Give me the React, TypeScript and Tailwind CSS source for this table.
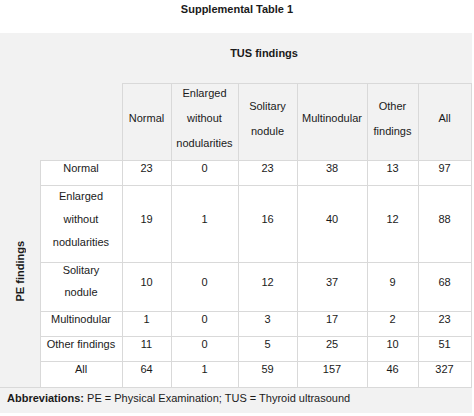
type Row = { label: string[]; labelLine: string; labelPad: string; h: string; values: number[] };

const headers: string[][] = [
  ["Normal"],
  ["Enlarged", "without", "nodularities"],
  ["Solitary", "nodule"],
  ["Multinodular"],
  ["Other", "findings"],
  ["All"],
];

const rows: Row[] = [
  { label: ["Normal"], labelLine: "h-[20px]", labelPad: "pb-[4px]", h: "h-[25px]", values: [23, 0, 23, 38, 13, 97] },
  {
    label: ["Enlarged", "without", "nodularities"],
    labelLine: "h-[23px]",
    labelPad: "pb-0",
    h: "h-[77px]",
    values: [19, 1, 16, 40, 12, 88],
  },
  { label: ["Solitary", "nodule"], labelLine: "h-[22px]", labelPad: "pb-[4px]", h: "h-[49px]", values: [10, 0, 12, 37, 9, 68] },
  { label: ["Multinodular"], labelLine: "h-[20px]", labelPad: "pb-[4px]", h: "h-[25px]", values: [1, 0, 3, 17, 2, 23] },
  { label: ["Other findings"], labelLine: "h-[20px]", labelPad: "pb-[4px]", h: "h-[25px]", values: [11, 0, 5, 25, 10, 51] },
  { label: ["All"], labelLine: "h-[20px]", labelPad: "pb-[4px]", h: "h-[26px]", values: [64, 1, 59, 157, 46, 327] },
];

// Word-style line spacing: glyphs sit at the top of each line box
const Lines = ({ lines, line }: { lines: string[]; line: string }) => (
  <>
    {lines.map((l, i) => (
      <span key={i} className={`block leading-[14px] ${line}`}>
        {l}
      </span>
    ))}
  </>
);

export default function App() {
  return (
    <div className="w-[474px] h-[416px] bg-white text-[#1a1a1a] text-[11px] font-['Liberation_Sans',Arial,sans-serif] overflow-hidden">
      <div className="h-[33px] pt-[2px] text-center font-bold leading-[14px]">Supplemental Table 1</div>
      <table className="w-[471px] table-fixed border-collapse bg-[#f2f2f2]">
        <colgroup>
          <col className="w-[40px]" />
          <col className="w-[82px]" />
          <col className="w-[49px]" />
          <col className="w-[67px]" />
          <col className="w-[59px]" />
          <col className="w-[70px]" />
          <col className="w-[51px]" />
          <col className="w-[53px]" />
        </colgroup>
        <tbody>
          <tr className="h-[50px]">
            <td colSpan={8} className="p-0 align-top pt-[13px] pl-[57px] text-center font-bold leading-[14px]">
              TUS findings
            </td>
          </tr>
          <tr className="h-[77px]">
            <td colSpan={2} className="p-0" />
            {headers.map((h, i) => (
              <td
                key={i}
                className="border border-[#d9d9d9] text-center align-middle p-0 whitespace-nowrap"
              >
                <Lines lines={h} line="h-[25px] pt-[2px]" />
              </td>
            ))}
          </tr>
          {rows.map((r, ri) => (
            <tr key={ri} className={r.h}>
              {ri === 0 && (
                <td rowSpan={rows.length} className="p-0 text-center align-middle">
                  <span className="inline-block font-bold leading-[14px] [writing-mode:vertical-rl] rotate-180">
                    PE findings
                  </span>
                </td>
              )}
              <td
                className={`border border-[#d9d9d9] bg-white text-center align-middle p-0 whitespace-nowrap ${r.labelPad}`}
              >
                <Lines lines={r.label} line={r.labelLine} />
              </td>
              {r.values.map((v, vi) => (
                <td
                  key={vi}
                  className="border border-[#d9d9d9] bg-white text-center align-middle p-0 pb-[4px]"
                >
                  <span className="block h-[20px] leading-[14px]">{v}</span>
                </td>
              ))}
            </tr>
          ))}
          <tr className="h-[26px]">
            <td colSpan={8} className="border-t border-[#d9d9d9] align-top p-0 pl-[7px] leading-[20px]">
              <span className="font-bold">Abbreviations:</span> PE = Physical Examination; TUS = Thyroid
              ultrasound
            </td>
          </tr>
        </tbody>
      </table>
    </div>
  );
}
